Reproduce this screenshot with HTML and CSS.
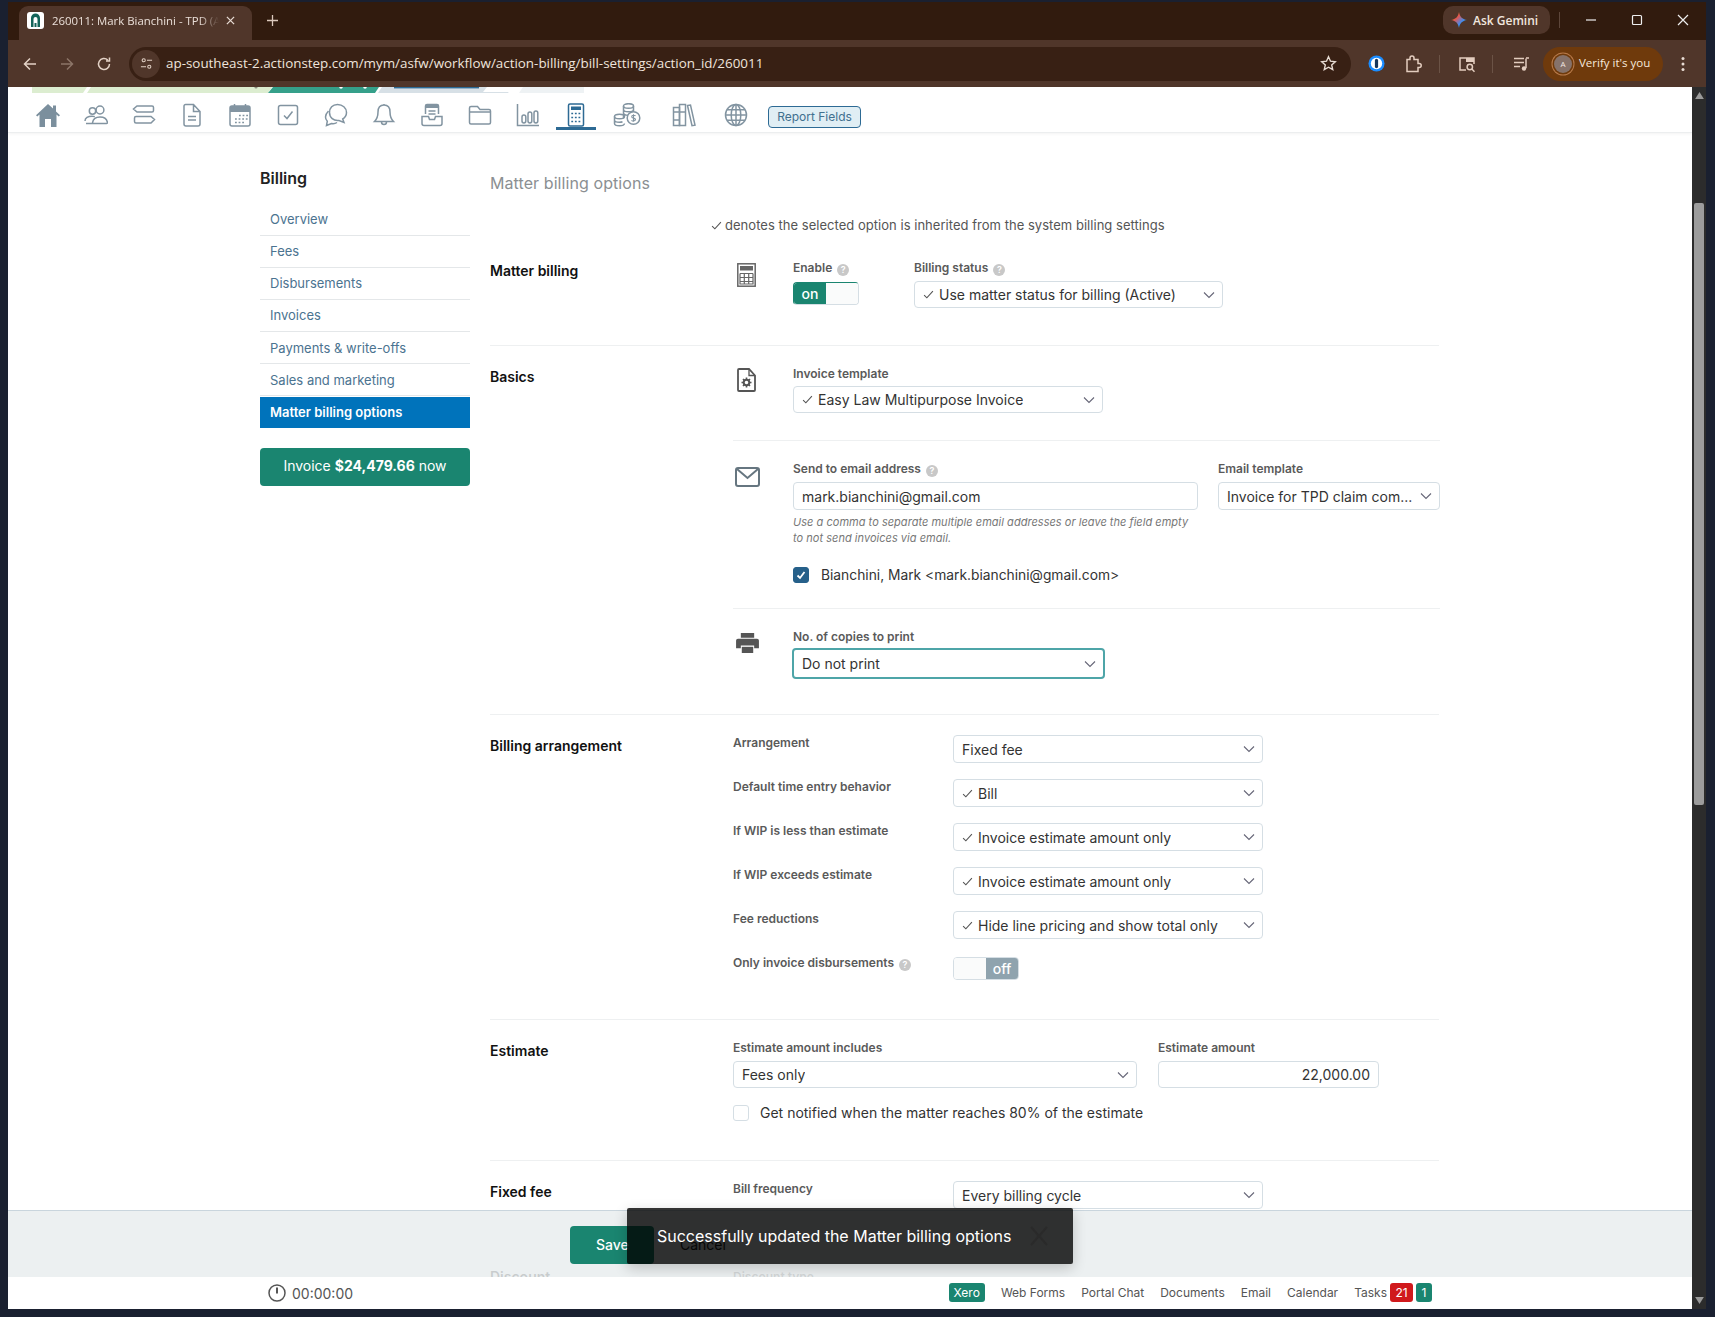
FILE: index.html
```html
<!DOCTYPE html>
<html lang="en">
<head>
<meta charset="utf-8">
<title>Matter billing options</title>
<link rel="stylesheet" href="styles.css">
</head>
<body>
<div class="window">
  <header class="tabstrip">
    <div class="tab">
      <svg class="favicon" viewBox="0 0 17 17"><rect width="17" height="17" rx="3" fill="#fff"/><path d="M4 15V6a4.500 4.500 0 0 1 9 0v9h-2.500V7a2 2 0 0 0-4 0v8z" fill="#14655a"/><path d="M7.500 15v-4h2v4z" fill="#14655a"/></svg>
      <span class="tabtitle">260011: Mark Bianchini - TPD (Actionstep)</span>
      <svg class="tabclose" viewBox="0 0 10 10"><path d="M1 1l8 8M9 1l-8 8" stroke="#e8dcd4" stroke-width="1.400"/></svg>
    </div>
    <svg class="newtab" viewBox="0 0 12 12"><path d="M6 0v12M0 6h12" stroke="#dcc9bd" stroke-width="1.400"/></svg>
    <div class="gemini">
      <svg viewBox="0 0 16 16" class="spark"><defs><linearGradient id="gem" x1="0" y1="0" x2="1" y2="1"><stop offset="0" stop-color="#f6c026"/><stop offset=".35" stop-color="#e8574a"/><stop offset=".65" stop-color="#3f8cf3"/><stop offset="1" stop-color="#35b872"/></linearGradient></defs><path d="M8 0c.6 4.400 3.200 7.300 8 8-4.800.7-7.400 3.600-8 8-.6-4.400-3.200-7.300-8-8 4.800-.7 7.400-3.600 8-8z" fill="url(#gem)"/></svg>
      <span>Ask Gemini</span>
    </div>
    <i class="wdiv"></i>
    <div class="winctl">
      <svg viewBox="0 0 12 12"><path d="M1 6h10" stroke="#eee" stroke-width="1.200"/></svg>
      <svg viewBox="0 0 12 12"><rect x="1.500" y="1.500" width="9" height="9" rx="1" fill="none" stroke="#eee" stroke-width="1.200"/></svg>
      <svg viewBox="0 0 12 12"><path d="M1 1l10 10M11 1L1 11" stroke="#eee" stroke-width="1.200"/></svg>
    </div>
  </header>
  <div class="toolbar">
    <div class="navbtns">
      <svg viewBox="0 0 16 16"><path d="M14 8H2.500M8 2.500L2.500 8 8 13.500" fill="none" stroke="#e3d2c6" stroke-width="1.500"/></svg>
      <svg viewBox="0 0 16 16"><path d="M2 8h11.500M8 2.500L13.500 8 8 13.500" fill="none" stroke="#8c7568" stroke-width="1.500"/></svg>
      <svg viewBox="0 0 16 16"><path d="M13.500 8A5.500 5.500 0 1 1 11.800 4M13.500 1.500V5H10" fill="none" stroke="#e3d2c6" stroke-width="1.500"/></svg>
    </div>
    <div class="omnibox">
      <span class="siteinfo"><svg viewBox="0 0 14 14"><circle cx="4" cy="3.500" r="1.700" fill="none" stroke="#e3d2c6" stroke-width="1.100"/><path d="M7.500 3.500H13M1 10.500h5.500" stroke="#e3d2c6" stroke-width="1.100"/><circle cx="10" cy="10.500" r="1.700" fill="none" stroke="#e3d2c6" stroke-width="1.100"/></svg></span>
      <span class="url">ap-southeast-2.actionstep.com/mym/asfw/workflow/action-billing/bill-settings/action_id/260011</span>
      <svg class="star" viewBox="0 0 16 16"><path d="M8 1.600l1.900 4.200 4.500.5-3.400 3 1 4.500L8 11.500l-4 2.300 1-4.500-3.400-3 4.500-.5z" fill="none" stroke="#e8dcd4" stroke-width="1.300"/></svg>
    </div>
    <div class="extras">
      <svg class="onepass" viewBox="0 0 18 18"><circle cx="9" cy="9" r="8.500" fill="#1a8cff"/><circle cx="9" cy="9" r="6" fill="#fff"/><rect x="7.300" y="4" width="3.400" height="10" rx="1.700" fill="#16365c"/></svg>
      <svg class="puzzle" viewBox="0 0 18 18"><path d="M3 4.500h3V3a2 2 0 0 1 4 0v1.500h4v4h1.200a2 2 0 0 1 0 4H14v4H3z" fill="none" stroke="#e3cdbf" stroke-width="1.500"/></svg>
      <i class="tdiv"></i>
      <svg class="lens" viewBox="0 0 18 18"><path d="M8 15H2V3h14v6" fill="none" stroke="#e3cdbf" stroke-width="1.500"/><path d="M8 3h8v4H8z" fill="#e3cdbf"/><circle cx="11.800" cy="12" r="2.700" fill="none" stroke="#e3cdbf" stroke-width="1.500"/><path d="M13.800 14l2.700 2.700" stroke="#e3cdbf" stroke-width="1.500"/></svg>
      <i class="tdiv second"></i>
      <svg class="media" viewBox="0 0 18 18"><path d="M2 3.500h10M2 7.500h10M2 11.500h6" stroke="#e3cdbf" stroke-width="1.500"/><path d="M14 3.500v9.500" stroke="#e3cdbf" stroke-width="1.500"/><path d="M14 3h3" stroke="#e3cdbf" stroke-width="1.500"/><circle cx="12" cy="13.500" r="2.200" fill="#e3cdbf"/></svg>
      <div class="verify">
        <span class="avatar">A</span>
        <span>Verify it's you</span>
      </div>
      <svg class="dots" viewBox="0 0 4 16"><circle cx="2" cy="2.500" r="1.500" fill="#e8dcd4"/><circle cx="2" cy="8" r="1.500" fill="#e8dcd4"/><circle cx="2" cy="13.500" r="1.500" fill="#e8dcd4"/></svg>
    </div>
  </div>

  <div class="viewport">
    <div class="page">
      <nav class="appnav">
        <svg class="strip" viewBox="0 0 560 6" width="560" height="6">
          <polygon points="0,0 55,0 51,6 0,6" fill="#dcedd0"/>
          <polygon points="59,0 240,0 236,6 55,6" fill="#dcedd0"/>
          <polygon points="241,0 347,0 343,6 236,6" fill="#35a08a"/>
          <polygon points="350,0 480,0 476,6 346,6" fill="#d7e0e6"/>
          <rect x="362" y="0" width="85" height="1.400" fill="#2d6a94"/>
          <polygon points="455,0 482,0 478,5 451,5" fill="#fff"/>
          <polygon points="491,0 552,0 552,6 487,6" fill="#eef2f4"/>
          <circle cx="224" cy="0" r="1.600" fill="#8a8f80"/>
          <circle cx="309" cy="0" r="1.800" fill="#fff"/>
          <circle cx="333" cy="0" r="1.800" fill="#fff"/>
        </svg>
        <div class="navrow">
          <a class="navitem"><svg viewBox="0 0 24 24"><path fill="#7b8f9d" stroke="none" d="M12 1L0 12.200l1.300 1.300L3.500 11.600V24H9v-8h6v8h5.500V11.600l2.200 1.900 1.300-1.300-4-3.700V2.500h-3v3z"/></svg></a>
          <a class="navitem"><svg viewBox="0 0 24 24"><circle cx="8.500" cy="8" r="3.200"/><circle cx="16" cy="7" r="3.900"/><path d="M1 18c0-3 3-4.800 7-4.800 1 0 2 .1 2.800.4M8 20.500h14.500c.8 0 1-.5.900-1.200-.5-3.300-3.300-5.400-7.400-5.400s-6.900 2-7.400 5.400c-.1.700.2 1.200.9 1.200H2"/></svg></a>
          <a class="navitem"><svg viewBox="0 0 24 24"><path d="M5 3h15a1.500 1.500 0 0 1 1.500 1.500v3A1.500 1.500 0 0 1 20 9H5L1.500 6zM4 13.500h15l3.500 3-3.500 3.500H4a1.500 1.500 0 0 1-1.500-1.500v-3.500A1.500 1.500 0 0 1 4 13.500z"/></svg></a>
          <a class="navitem"><svg viewBox="0 0 24 24"><path d="M5.500 1.500h8l6.500 7V21a2 2 0 0 1-2 2H6a2 2 0 0 1-2-2V3a1.500 1.500 0 0 1 1.500-1.500zM13.500 2v6.500H20M8 13.500h8M8 17h8"/></svg></a>
          <a class="navitem"><svg viewBox="0 0 24 24"><rect x="2" y="3" width="20" height="20" rx="2"/><path class="solid" d="M2 4.500A2 2 0 0 1 4 3h16a2 2 0 0 1 2 1.500V9H2z"/><path d="M6.500 1v3M17.500 1v3"/><path class="dashy" d="M11 12.500h9M7 16h13M7 19.500h9"/></svg></a>
          <a class="navitem"><svg viewBox="0 0 24 24"><rect x="2.500" y="2.500" width="19" height="19" rx="2"/><path d="M8 12.500l3 3 5.500-7"/></svg></a>
          <a class="navitem"><svg viewBox="0 0 24 24"><path d="M13.500 1.500c5 0 9 3.500 9 8 0 2.800-1.500 5-3.800 6.500l1.300 3.500-5-2c-5.500.7-9.500-3-9.500-8 0-4.500 3-8 8-8z"/><path d="M4.500 8C2.500 10 1.500 12 1.500 14c0 1.700.7 3 1.800 4.200L2.500 22.500l5-2c2 .4 4 0 5.500-1"/></svg></a>
          <a class="navitem"><svg viewBox="0 0 24 24"><path d="M12 2c-4 0-6 3-6 7 0 5-1 7-3.500 9.500h19C19 16 18 14 18 9c0-4-2-7-6-7zM12 2V1M9.500 19a2.500 2.500 0 0 0 5 0"/></svg></a>
          <a class="navitem"><svg viewBox="0 0 24 24"><path d="M5.500 11V3a1.500 1.500 0 0 1 1.500-1.500h10A1.500 1.500 0 0 1 18.500 3v8"/><path class="solid" d="M6 2h12v3H6z"/><path d="M8.500 8h7M8.500 11h7"/><path d="M2 13.500h6.500l1 3h5l1-3H22v7a2 2 0 0 1-2 2H4a2 2 0 0 1-2-2z"/></svg></a>
          <a class="navitem"><svg viewBox="0 0 24 24"><path d="M1.500 5a1.500 1.500 0 0 1 1.500-1.500h6.500l2.500 3H21A1.500 1.500 0 0 1 22.500 8v11.500A1.500 1.500 0 0 1 21 21H3a1.500 1.500 0 0 1-1.500-1.500zM1.500 9h21"/></svg></a>
          <a class="navitem"><svg viewBox="0 0 24 24"><path d="M1.500 1v21.500h21.500"/><rect x="6" y="12" width="3.800" height="8" rx="1.900"/><rect x="12" y="9" width="3.800" height="11" rx="1.900"/><rect x="18" y="8" width="3.800" height="12" rx="1.900"/></svg></a>
          <a class="navitem active"><svg viewBox="0 0 24 24"><rect x="4.500" y="1" width="15" height="22" rx="1.500"/><rect class="solid" x="7" y="3.500" width="10" height="3.500"/><path class="dashy" d="M7.300 10.500h10M7.300 14.500h10M7.300 18.500h10"/></svg></a>
          <a class="navitem coins"><svg viewBox="0 0 28 24"><ellipse cx="15.500" cy="3" rx="5" ry="2.300"/><path d="M10.500 3v12.500M20.500 3v5M10.500 6.500c0 1.300 2.200 2.300 5 2.300s5-1 5-2.300M10.500 10c0 1.300 2 2.200 4.500 2.300"/><ellipse cx="6.500" cy="13.500" rx="5" ry="2.300"/><path d="M1.500 13.500v7c0 1.300 2.200 2.300 5 2.300 2.600 0 4.800-1 5-2.300M1.500 17c0 1.300 2.200 2.300 5 2.300 1.200 0 2.300-.2 3-.5"/><circle cx="20.500" cy="15" r="6.300"/><path class="thin" d="M22.500 12.800c-.7-.8-3.800-.9-3.800.9 0 1.900 3.800 1 3.800 2.900 0 1.700-3.100 1.700-4 .7M20.500 11.200v7.600"/></svg></a>
          <a class="navitem books"><svg viewBox="0 0 24 24"><rect x="1.500" y="4.500" width="6" height="18"/><rect x="7.500" y="1.500" width="6" height="21"/><path d="M1.500 9h6M7.500 9h6M2 17h5"/><path d="M15.500 2.500l3-.5 4.500 20.200-3 .5z"/></svg></a>
          <a class="navitem globe"><svg viewBox="0 0 24 24"><circle cx="12" cy="12" r="10.500"/><ellipse cx="12" cy="12" rx="4.800" ry="10.500"/><path d="M12 1.500v21M1.500 12h21M3 6.800h18M3 17.200h18"/></svg></a>
          <a class="reportbtn">Report Fields</a>
        </div>
      </nav>

      <div class="scrollarea">
        <div class="columns">
          <aside class="sidebar">
            <h2 class="sidetitle">Billing</h2>
            <ul class="sidelist">
              <li>Overview</li>
              <li>Fees</li>
              <li>Disbursements</li>
              <li>Invoices</li>
              <li class="low">Payments &amp; write-offs</li>
              <li class="low">Sales and marketing</li>
              <li class="current">Matter billing options</li>
            </ul>
            <a class="invoicebtn">Invoice <b>$24,479.66</b> now</a>
          </aside>

          <main class="main">
            <h1 class="pagetitle">Matter billing options</h1>
            <p class="legend"><svg class="tick" viewBox="0 0 10 10"><path d="M1 5.500l2.500 2.500L9 2"/></svg>denotes the selected option is inherited from the system billing settings</p>

            <section class="sec sec-first">
              <h3>Matter billing</h3>
              <div class="group g-status">
                <div class="gicon">
                  <svg viewBox="0 0 19 24"><rect x=".8" y=".8" width="17.400" height="22.400" fill="none" stroke="#666" stroke-width="1.500"/><rect x="3" y="3" width="13" height="4.500" fill="#666"/><path d="M3 10.500h13M3 14.500h13M3 18.500h13M3 10.500V21h13V10.500M7.300 10.500V21M11.700 10.500V21" fill="none" stroke="#666" stroke-width="1.200"/></svg>
                </div>
                <div class="field f-enable">
                  <label>Enable <i class="help">?</i></label>
                  <div class="toggle on"><span class="tval">on</span><span class="tknob"></span></div>
                </div>
                <div class="field f-status">
                  <label>Billing status <i class="help">?</i></label>
                  <div class="select"><svg class="tick" viewBox="0 0 10 10"><path d="M1 5.500l2.500 2.500L9 2"/></svg><span>Use matter status for billing (Active)</span><svg class="chev" viewBox="0 0 12 8"><path d="M1 1.500l5 5 5-5"/></svg></div>
                </div>
              </div>
            </section>

            <section class="sec">
              <h3>Basics</h3>
              <div>
                <div class="group g-template">
                  <div class="gicon">
                    <svg viewBox="0 0 19 24"><path d="M1 2a1 1 0 0 1 1-1h10l6 6.500V22a1 1 0 0 1-1 1H2a1 1 0 0 1-1-1z" fill="none" stroke="#555" stroke-width="1.800"/><path d="M12 1v6.500h6" fill="none" stroke="#555" stroke-width="1.300"/><circle cx="9.500" cy="14.500" r="2.800" fill="none" stroke="#555" stroke-width="2"/><path d="M9.500 9.500v2M9.500 17.500v2M4.500 14.500h2M12.500 14.500h2M6 11l1.400 1.400M11.600 16.600L13 18M13 11l-1.400 1.400M7.400 16.600L6 18" stroke="#555" stroke-width="1.600"/></svg>
                  </div>
                  <div class="field f-template">
                    <label>Invoice template</label>
                    <div class="select"><svg class="tick" viewBox="0 0 10 10"><path d="M1 5.500l2.500 2.500L9 2"/></svg><span>Easy Law Multipurpose Invoice</span><svg class="chev" viewBox="0 0 12 8"><path d="M1 1.500l5 5 5-5"/></svg></div>
                  </div>
                </div>
                <div class="group g-email">
                  <div class="gicon gicon-wide">
                    <svg viewBox="0 0 25 20"><rect x="1" y="1" width="23" height="18" rx="2" fill="none" stroke="#667680" stroke-width="2"/><path d="M2 2l10.500 9L23 2" fill="none" stroke="#667680" stroke-width="2"/></svg>
                  </div>
                  <div class="emailcol">
                    <div class="emailrow">
                      <div class="field f-email">
                        <label>Send to email address <i class="help">?</i></label>
                        <div class="input">mark.bianchini@gmail.com</div>
                      </div>
                      <div class="field f-etemplate">
                        <label>Email template</label>
                        <div class="select"><span>Invoice for TPD claim com...</span><svg class="chev" viewBox="0 0 12 8"><path d="M1 1.500l5 5 5-5"/></svg></div>
                      </div>
                    </div>
                    <p class="hint">Use a comma to separate multiple email addresses or leave the field empty<br>to not send invoices via email.</p>
                    <div class="check">
                      <span class="box checked"><svg viewBox="0 0 12 12"><path d="M2.500 6.500l2.500 2.500 4.500-6"/></svg></span>
                      <span>Bianchini, Mark &lt;mark.bianchini@gmail.com&gt;</span>
                    </div>
                  </div>
                </div>
                <div class="group g-print">
                  <div class="gicon gicon-wide gicon-print">
                    <svg viewBox="0 0 24 21"><path d="M5 0h14v5H5z" fill="#555"/><path d="M2 6h20a2 2 0 0 1 2 2v8h-5v-3H5v3H0V8a2 2 0 0 1 2-2z" fill="#555"/><path d="M6 14.500h12V21H6z" fill="#555"/></svg>
                  </div>
                  <div class="field f-print">
                    <label>No. of copies to print</label>
                    <div class="select focused"><span>Do not print</span><svg class="chev" viewBox="0 0 12 8"><path d="M1 1.500l5 5 5-5"/></svg></div>
                  </div>
                </div>
              </div>
            </section>

            <section class="sec sec-arr">
              <h3>Billing arrangement</h3>
              <div class="rows">
                <div class="row"><label>Arrangement</label><div class="select"><span>Fixed fee</span><svg class="chev" viewBox="0 0 12 8"><path d="M1 1.500l5 5 5-5"/></svg></div></div>
                <div class="row"><label>Default time entry behavior</label><div class="select"><svg class="tick" viewBox="0 0 10 10"><path d="M1 5.500l2.500 2.500L9 2"/></svg><span>Bill</span><svg class="chev" viewBox="0 0 12 8"><path d="M1 1.500l5 5 5-5"/></svg></div></div>
                <div class="row"><label>If WIP is less than estimate</label><div class="select"><svg class="tick" viewBox="0 0 10 10"><path d="M1 5.500l2.500 2.500L9 2"/></svg><span>Invoice estimate amount only</span><svg class="chev" viewBox="0 0 12 8"><path d="M1 1.500l5 5 5-5"/></svg></div></div>
                <div class="row"><label>If WIP exceeds estimate</label><div class="select"><svg class="tick" viewBox="0 0 10 10"><path d="M1 5.500l2.500 2.500L9 2"/></svg><span>Invoice estimate amount only</span><svg class="chev" viewBox="0 0 12 8"><path d="M1 1.500l5 5 5-5"/></svg></div></div>
                <div class="row"><label>Fee reductions</label><div class="select"><svg class="tick" viewBox="0 0 10 10"><path d="M1 5.500l2.500 2.500L9 2"/></svg><span>Hide line pricing and show total only</span><svg class="chev" viewBox="0 0 12 8"><path d="M1 1.500l5 5 5-5"/></svg></div></div>
                <div class="row rowtoggle"><label>Only invoice disbursements <i class="help">?</i></label><div class="toggle off"><span class="tknob"></span><span class="tval">off</span></div></div>
              </div>
            </section>

            <section class="sec sec-est">
              <h3>Estimate</h3>
              <div>
                <div class="estrow">
                  <div class="field f-includes">
                    <label>Estimate amount includes</label>
                    <div class="select"><span>Fees only</span><svg class="chev" viewBox="0 0 12 8"><path d="M1 1.500l5 5 5-5"/></svg></div>
                  </div>
                  <div class="field f-amount">
                    <label>Estimate amount</label>
                    <div class="input amount">22,000.00</div>
                  </div>
                </div>
                <div class="check estcheck">
                  <span class="box"></span>
                  <span>Get notified when the matter reaches 80% of the estimate</span>
                </div>
              </div>
            </section>

            <section class="sec sec-fixed">
              <h3>Fixed fee</h3>
              <div class="rows">
                <div class="row"><label>Bill frequency</label><div class="select"><span>Every billing cycle</span><svg class="chev" viewBox="0 0 12 8"><path d="M1 1.500l5 5 5-5"/></svg></div></div>
              </div>
            </section>

            <section class="sec sec-discount">
              <h3>Discount</h3>
              <div class="rows">
                <div class="row"><label>Discount type</label></div>
              </div>
            </section>
          </main>
        </div>

        <div class="savebar">
          <a class="savebtn">Save</a>
          <a class="cancelbtn">Cancel</a>
        </div>
        <div class="toast">
          <span>Successfully updated the Matter billing options</span>
          <svg viewBox="0 0 20 20"><path d="M2 1l16 18M18 1L2 19" stroke="#2a2a2a" stroke-width="2"/></svg>
        </div>
      </div>

      <footer class="footer">
        <div class="timer">
          <svg viewBox="0 0 18 18"><circle cx="9" cy="9" r="8" fill="none" stroke="#555" stroke-width="1.500"/><path d="M9 3.500V9.500" stroke="#555" stroke-width="2"/></svg>
          <span>00:00:00</span>
        </div>
        <div class="links">
          <span class="badge xero">Xero</span>
          <a>Web Forms</a>
          <a>Portal Chat</a>
          <a>Documents</a>
          <a>Email</a>
          <a>Calendar</a>
          <span class="tasks">
            <a>Tasks</a>
            <span class="badge red">21</span>
            <span class="badge teal">1</span>
          </span>
        </div>
      </footer>
    </div>
    <div class="scrollbar">
      <svg class="sarrow" viewBox="0 0 10 8"><path d="M5 0l5 8H0z" fill="#9a9a9a"/></svg>
      <div class="thumb"></div>
      <svg class="sarrow down" viewBox="0 0 10 8"><path d="M0 0h10L5 8z" fill="#9a9a9a"/></svg>
    </div>
  </div>
</div>
</body>
</html>
```
FILE: styles.css
```css
* { box-sizing: border-box; }
html, body { margin: 0; height: 100%; }
body {
  background: #1a2030;
  font-family: Inter, "Liberation Sans", sans-serif;
  overflow: hidden;
}
h1, h2, h3, p, ul { margin: 0; padding: 0; }
a { color: inherit; text-decoration: none; }

.window {
  width: 1698px;
  height: 1307px;
  margin: 2px 0 0 8px;
  display: flex;
  flex-direction: column;
}

/* Browser chrome */
.tabstrip {
  height: 38px;
  background: #311b0e;
  display: flex;
  align-items: flex-end;
  padding-left: 11px;
  flex: none;
}
.tab {
  width: 233px;
  height: 34px;
  background: #50362a;
  border-radius: 9px 9px 0 0;
  display: flex;
  align-items: center;
  padding: 0 10px 5px 8px;
  color: #eadfd8;
  font: 11.400px "Open Sans", sans-serif;
}
.favicon { width: 17px; height: 17px; flex: none; }
.tabtitle {
  width: 167px;
  margin-left: 8px;
  white-space: nowrap;
  overflow: hidden;
  -webkit-mask-image: linear-gradient(90deg, #000 88%, transparent);
  mask-image: linear-gradient(90deg, #000 88%, transparent);
}
.tabclose { width: 9px; height: 9px; margin-left: 7px; flex: none; }
.newtab { width: 11px; height: 11px; margin: 0 0 14px 15px; flex: none; }
.gemini {
  margin: 0 0 6px auto;
  width: 107px;
  height: 28px;
  background: #50362a;
  border-radius: 10px;
  display: flex;
  align-items: center;
  gap: 6px;
  padding-left: 9px;
  color: #f0e6df;
  font: 600 12px "Open Sans", sans-serif;
}
.spark { width: 16px; height: 16px; flex: none; margin-left: -1px; }
.wdiv { width: 1px; height: 16px; background: #5d463a; margin: 0 0 12px 9px; }
.winctl { display: flex; align-items: center; margin: 0 17px 14px 0; gap: 34px; padding-left: 25px; }
.winctl svg { width: 12px; height: 12px; }

.toolbar {
  height: 47px;
  background: #50362a;
  display: flex;
  align-items: center;
  flex: none;
}
.navbtns { display: flex; align-items: center; gap: 21px; padding-left: 14px; width: 121px; }
.navbtns svg { width: 16px; height: 16px; flex: none; }
.omnibox {
  width: 1222px;
  height: 34px;
  background: #382014;
  border-radius: 17px;
  display: flex;
  align-items: center;
  padding: 0 14px 0 3px;
}
.siteinfo {
  width: 28px; height: 28px; border-radius: 50%;
  background: #50362a;
  display: flex; align-items: center; justify-content: center;
  flex: none;
}
.siteinfo svg { width: 13px; height: 13px; }
.url {
  margin: -1px 0 0 6px;
  color: #efe4dc;
  font: 13.400px "Open Sans", sans-serif;
  white-space: nowrap;
}
.star { width: 17px; height: 17px; margin-left: auto; flex: none; }
.extras { flex: 1; display: flex; align-items: center; padding-left: 17px; }
.onepass { width: 17px; height: 17px; flex: none; }
.puzzle { width: 18px; height: 18px; margin-left: 19px; flex: none; }
.tdiv { width: 1px; height: 18px; background: #6b5346; margin-left: 17px; flex: none; }
.lens { width: 18px; height: 18px; margin-left: 18px; flex: none; }
.tdiv.second { margin-left: 16px; }
.media { width: 18px; height: 18px; margin-left: 19px; flex: none; }
.verify {
  width: 120px;
  height: 34px;
  margin-left: 13px;
  background: #6f3a0c;
  border-radius: 17px;
  display: flex;
  align-items: center;
  padding-left: 11px;
  gap: 7px;
  color: #f6e8dc;
  font: 11.500px "Open Sans", sans-serif;
  white-space: nowrap;
  flex: none;
}
.verify span:last-child { margin-top: -2px; }
.avatar {
  width: 18px; height: 18px; border-radius: 50%;
  background: #86726a;
  box-shadow: 0 0 0 1.500px #6f3a0c, 0 0 0 2.500px #b87a4a;
  color: #f1e6e0;
  font-size: 8px;
  display: flex; align-items: center; justify-content: center;
  flex: none;
}
.dots { width: 4px; height: 16px; margin-left: 18px; flex: none; }

/* Page */
.viewport { flex: 1; display: flex; min-height: 0; }
.page { width: 1684px; display: flex; flex-direction: column; background: #fff; }
.scrollbar {
  width: 14px;
  background: #2c2c2c;
  display: flex;
  flex-direction: column;
  align-items: center;
  padding-top: 5px;
}
.sarrow { width: 9px; height: 7px; flex: none; }
.thumb { width: 10px; height: 602px; margin-top: 104px; background: #9c9c9c; border-radius: 2px; flex: none; }
.sarrow.down { margin-top: auto; margin-bottom: 5px; }

.appnav {
  height: 46px;
  flex: none;
  border-bottom: 1px solid #eceeef;
  box-shadow: 0 1px 3px rgba(0,0,0,.05);
  position: relative;
  z-index: 2;
  background: #fff;
}
.strip { display: block; margin-left: 24px; }
.navrow { display: flex; padding-left: 16px; height: 39px; align-items: flex-start; }
.navitem {
  width: 48px;
  height: 37px;
  padding-top: 10px;
  display: flex;
  justify-content: center;
  flex: none;
}
.navitem svg {
  width: 24px;
  height: 24px;
  fill: none;
  stroke: #8294a1;
  stroke-width: 1.500;
}
.navitem .solid { fill: #8294a1; stroke: none; }
.navitem .dashy { stroke-dasharray: 1.800 1.800; stroke-width: 1.600; }
.navitem .thin { stroke-width: 1.100; }
.navitem.active { position: relative; }
.navitem.active svg { stroke: #2d6a94; }
.navitem.active .solid { fill: #2d6a94; }
.navitem.active::after {
  content: "";
  position: absolute;
  left: 4px; right: 4px; bottom: 0;
  height: 3px;
  background: #2d6a94;
}
.navitem.coins { width: 54px; }
.navitem.coins svg { width: 28px; }
.navitem.books { width: 60px; }
.navitem.globe { width: 44px; }
.reportbtn {
  margin: 13px 0 0 10px;
  width: 93px;
  height: 22px;
  background: #e0eef4;
  border: 1px solid #2d6a94;
  border-radius: 4px;
  color: #41708f;
  font-size: 12px;
  line-height: 20px;
  text-align: center;
  flex: none;
}

.scrollarea { flex: 1; position: relative; overflow: hidden; min-height: 0; }
.columns { display: flex; padding-left: 252px; gap: 20px; }

.sidebar { width: 210px; flex: none; padding-top: 34px; }
.sidetitle { font-size: 16px; font-weight: 600; line-height: 22px; color: #222; }
.sidelist { list-style: none; margin-top: 15px; }
.sidelist li {
  height: 32px;
  line-height: 31px;
  padding-left: 10px;
  font-size: 13px;
  color: #4b7390;
  border-bottom: 1px solid #e4e7e9;
}
.sidelist li.low { line-height: 33px; }
.sidelist li.current {
  height: 31px;
  margin-top: 1px;
  background: #0073bb;
  color: #fff;
  font-weight: 600;
  border: 0;
}
.invoicebtn {
  display: block;
  margin-top: 20px;
  height: 38px;
  line-height: 36px;
  background: #1a8570;
  border-radius: 4px;
  color: #fff;
  font-size: 14px;
  text-align: center;
}
.invoicebtn b { font-weight: 700; }

.main { width: 949px; flex: none; }
.pagetitle { margin-top: 40px; font-size: 16px; font-weight: 400; line-height: 20px; letter-spacing: .08px; color: #8b8f92; }
.legend {
  margin: 22px 0 0 221px;
  font-size: 13px;
  line-height: 20px;
  letter-spacing: .03px;
  color: #555;
  display: flex;
  align-items: center;
}
.tick { width: 11px; height: 11px; fill: none; stroke: #555; stroke-width: 1; flex: none; margin-right: 5px; }
.legend .tick { margin-right: 3px; }

.sec {
  display: grid;
  grid-template-columns: 243px 1fr;
  padding-top: 20px;
  border-bottom: 1px solid #eef0f1;
}
.sec h3 { font-size: 14px; font-weight: 600; line-height: 20px; color: #111; margin-top: 1px; }
.sec-first { padding-top: 26px; }
.sec-first h3 { margin-top: 0; }

label {
  display: block;
  font-size: 12px;
  font-weight: 600;
  line-height: 16px;
  color: #5a5a5a;
  white-space: nowrap;
}
.help {
  display: inline-block;
  width: 12px; height: 12px; border-radius: 50%;
  background: #c8c8c8;
  color: #fff;
  font-size: 9px;
  font-style: normal;
  line-height: 12px;
  text-align: center;
  margin-left: 2px;
  vertical-align: -1px;
}
.select, .input {
  height: 27px;
  border: 1px solid #d5dee4;
  border-radius: 4px;
  background: #fff;
  display: flex;
  align-items: center;
  font-size: 14px;
  color: #333;
  padding: 0 8px;
  white-space: nowrap;
}
.select span { overflow: hidden; }
.chev { width: 12px; height: 8px; margin: 0 -1px 0 auto; fill: none; stroke: #667; stroke-width: 1.100; flex: none; }

.group { display: flex; }
.gicon { width: 60px; padding-left: 4px; flex: none; }
.gicon svg { display: block; width: 19px; height: 24px; margin-top: 2px; }
.gicon-wide { padding-left: 2px; }
.gicon-wide svg { width: 25px; height: 20px; margin-top: 6px; }
.gicon-print svg { margin-top: 4px; }
.field label { margin-bottom: 4px; }

.g-status { padding-bottom: 37px; }
.f-status label, .f-enable label { margin: -1px 0 5px; }
.f-enable { width: 121px; }
.f-status { width: 309px; }
.toggle {
  width: 66px;
  height: 23px;
  border: 1px solid #d5dee4;
  border-radius: 4px;
  display: flex;
  overflow: hidden;
  font-size: 14px;
  font-weight: 500;
  margin-top: 6px;
}
.toggle .tval { width: 32px; color: #fff; text-align: center; line-height: 21px; }
.toggle .tknob { flex: 1; background: #fafbfb; }
.toggle.on { border-color: #1a8570 #d5dee4 #d5dee4 #1a8570; }
.toggle.on .tval { background: #1a8570; }
.toggle.off .tval { background: #8fa3ae; }

.g-template { padding-bottom: 27px; border-bottom: 1px solid #eef0f1; }
.f-template { width: 310px; }
.g-email { padding: 20px 0 25px; border-bottom: 1px solid #eef0f1; }
.emailcol { flex: 1; }
.emailrow { display: flex; gap: 20px; }
.f-email { width: 405px; }
.f-email label { margin-bottom: 5px; }
.f-email .input { height: 28px; }
.f-etemplate { width: 222px; }
.f-etemplate label { margin-bottom: 5px; }
.f-etemplate .select { height: 28px; }
.hint { margin-top: 4px; font-size: 11px; font-style: italic; line-height: 16px; letter-spacing: .03px; color: #777; }
.check { display: flex; align-items: center; gap: 12px; margin-top: 21px; font-size: 13.800px; color: #333; }
.box { width: 16px; height: 16px; border: 1px solid #d5dee4; border-radius: 3px; background: #fff; flex: none; }
.box.checked { background: #26608a; border-color: #26608a; display: flex; align-items: center; justify-content: center; }
.box.checked svg { width: 12px; height: 12px; fill: none; stroke: #fff; stroke-width: 1.800; }

.g-print { padding: 20px 0 35px; }
.f-print { width: 312px; }
.f-print label { margin-bottom: 3px; }
.select.focused {
  height: 31px;
  margin-left: -1px;
  border: 2px solid #4ea5a8;
  padding: 0 8px;
}

.rows { display: flex; flex-direction: column; gap: 16px; }
.row { display: grid; grid-template-columns: 220px 310px; }
.row .select { height: 28px; }
.rowtoggle .toggle { margin-top: 2px; }
.sec-arr { padding-bottom: 39px; }

.estrow { display: flex; gap: 21px; }
.f-includes { width: 404px; }
.f-includes label, .f-amount label { margin-bottom: 5px; }
.f-amount { width: 221px; }
.amount { justify-content: flex-end; }
.estcheck { margin: 16px 0 39px; gap: 11px; font-size: 14px; }

.sec-fixed { padding-bottom: 0; height: 113px; border: 0; }
.sec-discount { padding-top: 0; border: 0; margin-top: -8px; }
.sec-discount .rows { margin-top: 3px; }

.savebar {
  position: absolute;
  left: 0; right: 0; bottom: 0;
  height: 67px;
  background: rgba(233, 237, 239, .85);
  border-top: 1px solid #c9d5dd;
  padding: 15px 0 0 562px;
  display: flex;
  align-items: flex-start;
  z-index: 3;
}
.savebtn {
  width: 84px;
  height: 38px;
  background: #1a8570;
  border-radius: 4px;
  color: #fff;
  font-size: 14px;
  font-weight: 500;
  line-height: 38px;
  padding-left: 26px;
}
.cancelbtn { margin-left: 26px; font-size: 14px; line-height: 38px; color: #222; }
.toast {
  position: absolute;
  left: 619px;
  top: 1075px;
  width: 446px;
  height: 56px;
  background: rgba(0, 0, 0, .8);
  border-radius: 2px;
  box-shadow: 0 4px 14px rgba(0,0,0,.2);
  color: #fff;
  font-size: 16px;
  line-height: 56px;
  padding-left: 30px;
  display: flex;
  z-index: 4;
}
.toast span { white-space: nowrap; }
.toast svg { width: 20px; height: 20px; margin: 18px 0 0 18px; flex: none; }

.footer {
  height: 32px;
  flex: none;
  background: #fff;
  position: relative;
  z-index: 3;
  display: flex;
  justify-content: space-between;
  padding: 0 260px;
  align-items: center;
}
.timer { display: flex; align-items: center; gap: 6px; font-size: 14px; color: #555; }
.timer svg { width: 18px; height: 18px; }
.links { display: flex; align-items: center; gap: 16px; font-size: 12px; color: #555; margin-top: -2px; }
.badge {
  display: inline-block;
  height: 19px;
  line-height: 19px;
  padding: 0 5px;
  border-radius: 3px;
  color: #fff;
  font-size: 12px;
  text-align: center;
}
.xero, .teal { background: #1a8570; }
.red { background: #d0191c; width: 23px; padding: 0; }
.teal { width: 16px; padding: 0; }
.tasks { display: flex; align-items: center; gap: 3px; }
```
